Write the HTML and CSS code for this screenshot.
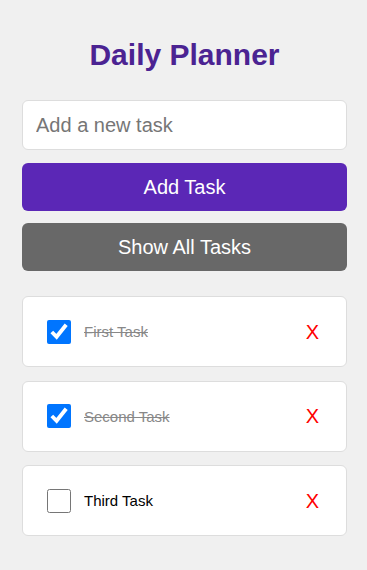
FILE: index.html
```html
<!DOCTYPE html>
<html>
<head>
<meta charset="utf-8">
<link rel="stylesheet" href="styles.css">
</head>
<body>
<div class="app">
  <h1 class="title">Daily Planner</h1>
  <input class="task-input" type="text" placeholder="Add a new task">
  <button class="btn btn-add">Add Task</button>
  <button class="btn btn-show">Show All Tasks</button>
  <ul class="task-list">
    <li class="task">
      <input class="task-check" type="checkbox" checked>
      <span class="task-text done">First Task</span>
      <button class="task-delete">X</button>
    </li>
    <li class="task">
      <input class="task-check" type="checkbox" checked>
      <span class="task-text done">Second Task</span>
      <button class="task-delete">X</button>
    </li>
    <li class="task">
      <input class="task-check" type="checkbox">
      <span class="task-text">Third Task</span>
      <button class="task-delete">X</button>
    </li>
  </ul>
</div>
</body>
</html>
```
FILE: styles.css
```css
html, body {
  margin: 0;
  padding: 0;
  background: #f0f0f0;
  font-family: "Liberation Sans", Arial, sans-serif;
}
.app {
  display: flex;
  flex-direction: column;
  padding: 38px 20px 20px 22px;
}
.title {
  margin: 0 0 28px;
  text-align: center;
  font-size: 30px;
  font-weight: bold;
  color: #4b2392;
  line-height: 34px;
}
.task-input {
  box-sizing: border-box;
  height: 50px;
  margin: 0 0 13px;
  padding: 0 13px;
  border: 1px solid #dddddd;
  border-radius: 6px;
  background: #fff;
  font-family: inherit;
  font-size: 20px;
  color: #333;
  outline: none;
}
.task-input::placeholder {
  color: #767676;
}
.btn {
  box-sizing: border-box;
  height: 48px;
  border: none;
  border-radius: 6px;
  color: #fff;
  font-family: inherit;
  font-size: 20px;
  cursor: pointer;
}
.btn-add {
  background: #5b27b6;
  margin-bottom: 12px;
}
.btn-show {
  background: #686868;
  margin-bottom: 25px;
}
.task-list {
  list-style: none;
  margin: 0;
  padding: 0;
  display: flex;
  flex-direction: column;
  gap: 13.5px;
}
.task {
  box-sizing: border-box;
  height: 71px;
  display: flex;
  align-items: center;
  padding: 0 20px;
  background: #fff;
  border: 1px solid #dddddd;
  border-radius: 6px;
}
.task-check {
  width: 24px;
  height: 24px;
  margin: 0 13px 0 4px;
}
.task-text {
  flex: 1;
  font-size: 15px;
  color: #000;
}
.task-text.done {
  color: #888;
  text-decoration: line-through;
}
.task-delete {
  border: none;
  background: none;
  padding: 0 7px 0 0;
  color: #ff0000;
  font-family: inherit;
  font-size: 20px;
  line-height: 24px;
  cursor: pointer;
}
```
